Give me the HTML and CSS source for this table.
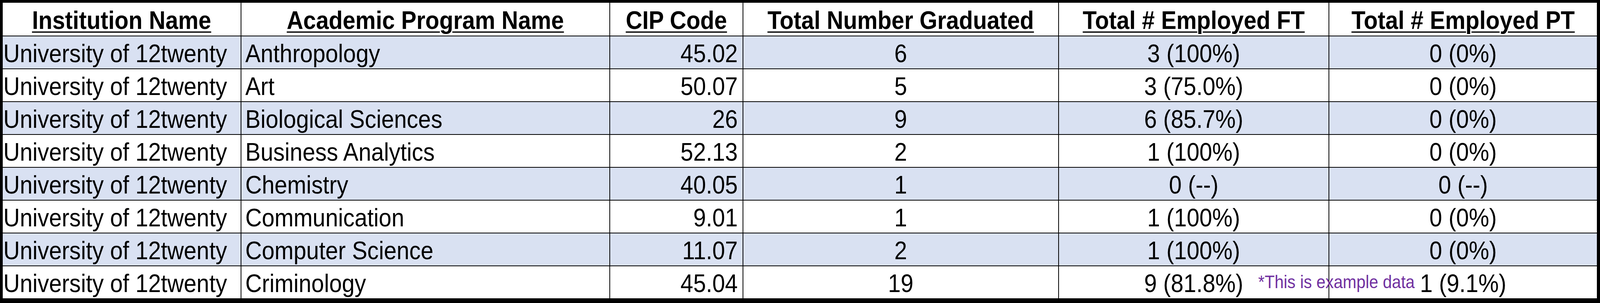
FILE: index.html
```html
<!DOCTYPE html>
<html lang="en">
<head>
<meta charset="utf-8">
<title>Graduate Employment</title>
<link rel="stylesheet" href="styles.css">
</head>
<body>
<div class="sheet">
  <div class="grid">
    <div class="row head">
      <div class="cell c-ctr"><span class="hd">Institution Name</span></div>
      <div class="cell c-ctr"><span class="hd">Academic Program Name</span></div>
      <div class="cell c-ctr"><span class="hd">CIP Code</span></div>
      <div class="cell c-ctr"><span class="hd">Total Number Graduated</span></div>
      <div class="cell c-ctr"><span class="hd">Total # Employed FT</span></div>
      <div class="cell c-ctr"><span class="hd">Total # Employed PT</span></div>
    </div>
    <div class="row alt">
      <div class="cell c-inst"><span>University of 12twenty</span></div>
      <div class="cell c-prog"><span>Anthropology</span></div>
      <div class="cell c-cip"><span>45.02</span></div>
      <div class="cell c-ctr"><span>6</span></div>
      <div class="cell c-ctr"><span>3 (100%)</span></div>
      <div class="cell c-ctr"><span>0 (0%)</span></div>
    </div>
    <div class="row">
      <div class="cell c-inst"><span>University of 12twenty</span></div>
      <div class="cell c-prog"><span>Art</span></div>
      <div class="cell c-cip"><span>50.07</span></div>
      <div class="cell c-ctr"><span>5</span></div>
      <div class="cell c-ctr"><span>3 (75.0%)</span></div>
      <div class="cell c-ctr"><span>0 (0%)</span></div>
    </div>
    <div class="row alt">
      <div class="cell c-inst"><span>University of 12twenty</span></div>
      <div class="cell c-prog"><span>Biological Sciences</span></div>
      <div class="cell c-cip"><span>26</span></div>
      <div class="cell c-ctr"><span>9</span></div>
      <div class="cell c-ctr"><span>6 (85.7%)</span></div>
      <div class="cell c-ctr"><span>0 (0%)</span></div>
    </div>
    <div class="row">
      <div class="cell c-inst"><span>University of 12twenty</span></div>
      <div class="cell c-prog"><span>Business Analytics</span></div>
      <div class="cell c-cip"><span>52.13</span></div>
      <div class="cell c-ctr"><span>2</span></div>
      <div class="cell c-ctr"><span>1 (100%)</span></div>
      <div class="cell c-ctr"><span>0 (0%)</span></div>
    </div>
    <div class="row alt">
      <div class="cell c-inst"><span>University of 12twenty</span></div>
      <div class="cell c-prog"><span>Chemistry</span></div>
      <div class="cell c-cip"><span>40.05</span></div>
      <div class="cell c-ctr"><span>1</span></div>
      <div class="cell c-ctr"><span>0 (--)</span></div>
      <div class="cell c-ctr"><span>0 (--)</span></div>
    </div>
    <div class="row">
      <div class="cell c-inst"><span>University of 12twenty</span></div>
      <div class="cell c-prog"><span>Communication</span></div>
      <div class="cell c-cip"><span>9.01</span></div>
      <div class="cell c-ctr"><span>1</span></div>
      <div class="cell c-ctr"><span>1 (100%)</span></div>
      <div class="cell c-ctr"><span>0 (0%)</span></div>
    </div>
    <div class="row alt">
      <div class="cell c-inst"><span>University of 12twenty</span></div>
      <div class="cell c-prog"><span>Computer Science</span></div>
      <div class="cell c-cip"><span>11.07</span></div>
      <div class="cell c-ctr"><span>2</span></div>
      <div class="cell c-ctr"><span>1 (100%)</span></div>
      <div class="cell c-ctr"><span>0 (0%)</span></div>
    </div>
    <div class="row">
      <div class="cell c-inst"><span>University of 12twenty</span></div>
      <div class="cell c-prog"><span>Criminology</span></div>
      <div class="cell c-cip"><span>45.04</span></div>
      <div class="cell c-ctr"><span>19</span></div>
      <div class="cell c-ctr"><span>9 (81.8%)</span></div>
      <div class="cell c-ctr"><span>1 (9.1%)</span></div>
    </div>
  </div>
  <div class="note">*This is example data</div>
</div>
</body>
</html>
```

FILE: styles.css
```css
html, body {
  margin: 0;
  padding: 0;
  background: #000;
}

.sheet {
  position: relative;
  width: 100%;
  height: 775px;
  box-sizing: border-box;
  padding: 7px 8px 12px 7px;
  background: #000;
  font-family: "Liberation Sans", Arial, sans-serif;
  color: #000;
  overflow: hidden;
}

.grid {
  display: grid;
  grid-template-columns: 654fr 1013fr 364fr 866fr 742fr 736fr;
  grid-template-rows: 84px repeat(8, 82px);
  gap: 2px;
  background: #000;
}

.row {
  display: contents;
}

.cell {
  min-width: 0;
  background: #fff;
  display: flex;
  align-items: flex-end;
  box-sizing: border-box;
  font-size: 1.43vw;
  line-height: 64px;
  padding-bottom: 3px;
  white-space: nowrap;
  overflow: hidden;
}

.cell > span {
  display: inline-block;
  transform: scaleY(1.1);
  transform-origin: 50% 100%;
}

.row.alt .cell {
  background: #d9e1f2;
}

.row.head .cell {
  padding-bottom: 4px;
}

.hd {
  font-weight: bold;
  text-decoration: underline;
  text-decoration-thickness: 3px;
  text-underline-offset: 6px;
}

.c-inst {
  justify-content: flex-start;
  padding-left: 0.23%;
}

.c-prog {
  justify-content: flex-start;
  padding-left: 1.1%;
}

.c-cip {
  justify-content: flex-end;
  padding-right: 3.6%;
}

.c-ctr {
  justify-content: center;
}

.note {
  position: absolute;
  left: 78.64%;
  top: 696px;
  font-size: 1.023vw;
  line-height: 45px;
  color: #7030a0;
  white-space: nowrap;
  transform: scaleY(1.1);
  transform-origin: 0 0;
}
```
